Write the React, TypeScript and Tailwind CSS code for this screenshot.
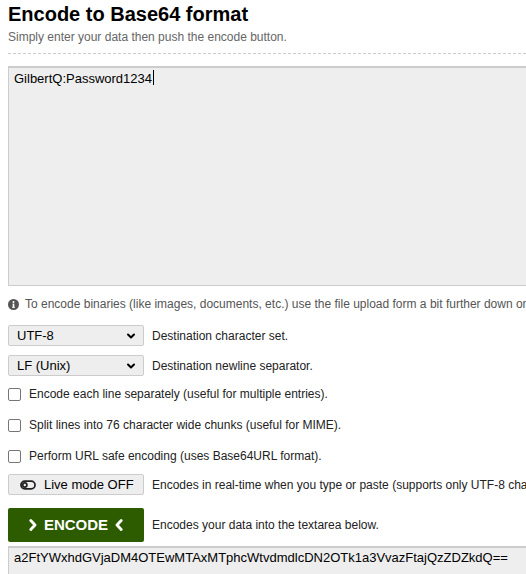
import * as React from "react";
import { ChevronDown } from "lucide-react";

const OUTPUT = "a2FtYWxhdGVjaDM4OTEwMTAxMTphcWtvdmdlcDN2OTk1a3VvazFtajQzZDZkdQ==";

function Select({ value }: { value: string }) {
  return (
    <div className="flex h-[21px] w-[136px] shrink-0 items-center justify-between rounded-[2px] border border-[#ccc] bg-[#eee] pl-2 pr-[6px] text-[13px] text-black">
      <span>{value}</span>
      <ChevronDown className="h-[12px] w-[12px]" strokeWidth={4} />
    </div>
  );
}

function Check({ label }: { label: string }) {
  return (
    <div className="flex items-center gap-2">
      <span className="h-[13px] w-[13px] shrink-0 rounded-[2px] border border-[#767676] bg-white" />
      <span>{label}</span>
    </div>
  );
}

function ToggleIcon() {
  return (
    <svg viewBox="0 0 20 12" className="h-[10px] w-[16px]">
      <rect x="1.2" y="1.2" width="17.6" height="9.6" rx="4.8" fill="none" stroke="#222" strokeWidth="2.2" />
      <circle cx="6" cy="6" r="2.6" fill="none" stroke="#222" strokeWidth="2.2" />
    </svg>
  );
}

function Arrow({ dir }: { dir: "left" | "right" }) {
  return (
    <svg viewBox="0 0 8 12" className="h-[12px] w-[8px]">
      <polyline
        points={dir === "right" ? "1.8,1.5 6,6 1.8,10.5" : "6.2,1.5 2,6 6.2,10.5"}
        fill="none"
        stroke="#fff"
        strokeWidth="2.8"
        strokeLinecap="round"
        strokeLinejoin="round"
      />
    </svg>
  );
}

function InfoIcon() {
  return (
    <svg viewBox="0 0 12 12" className="h-[11px] w-[11px] shrink-0">
      <circle cx="6" cy="6" r="6" fill="#555" />
      <circle cx="6" cy="3.2" r="1.1" fill="#fff" />
      <rect x="5.1" y="5" width="1.8" height="4.4" fill="#fff" />
      <rect x="4.4" y="8.6" width="3.2" height="0.9" fill="#fff" />
    </svg>
  );
}

export default function App() {
  return (
    <div className="h-[574px] w-full overflow-hidden bg-white font-['Liberation_Sans',Arial,sans-serif] text-[12px] text-[#222]">
      <div className="w-[760px] whitespace-nowrap px-2">
        <h1 className="pt-[2px] text-[20px] font-bold leading-[24px] text-black">Encode to Base64 format</h1>
        <p className="mt-[4px] text-[12px] leading-[14px] text-[#666]">
          Simply enter your data then push the encode button.
        </p>
        <div className="mt-[9px] w-[518px] border-t border-dashed border-[#ccc]" />

        <div className="mt-[12px] h-[220px] w-full border-t-2 border-r border-b border-l border-[#ccc] bg-[#eee] px-[5px] pt-0 text-[13px] leading-[16px] text-black">
          GilbertQ:Password1234<span className="ml-px inline-block h-[15px] w-px translate-y-[2px] bg-black" />
        </div>

        <div className="mt-[9px] flex items-center gap-[6px] text-[#555]">
          <InfoIcon />
          <span>
            To encode binaries (like images, documents, etc.) use the file upload form a bit further down on this page.
          </span>
        </div>

        <div className="mt-[12px] flex items-center gap-2">
          <Select value="UTF-8" />
          <span>Destination character set.</span>
        </div>
        <div className="mt-[9px] flex items-center gap-2">
          <Select value="LF (Unix)" />
          <span>Destination newline separator.</span>
        </div>

        <div className="mt-[9px] flex flex-col gap-[13px]">
          <Check label="Encode each line separately (useful for multiple entries)." />
          <Check label="Split lines into 76 character wide chunks (useful for MIME)." />
          <Check label="Perform URL safe encoding (uses Base64URL format)." />
        </div>

        <div className="mt-[9px] flex items-center gap-2">
          <div className="flex h-[21px] w-[136px] shrink-0 items-center gap-[8px] rounded-[2px] border border-[#ccc] bg-[#eee] pl-[11px] text-[13px] text-black">
            <ToggleIcon />
            <span>Live mode OFF</span>
          </div>
          <span>Encodes in real-time when you type or paste (supports only UTF-8 character set).</span>
        </div>

        <div className="mt-[13px] flex items-center gap-2">
          <div className="flex h-[34px] w-[136px] shrink-0 items-center justify-center gap-[7px] rounded-[2px] bg-[#2c5b00] text-[15px] font-bold text-white">
            <Arrow dir="right" />
            <span>ENCODE</span>
            <Arrow dir="left" />
          </div>
          <span>Encodes your data into the textarea below.</span>
        </div>

        <div className="mt-[4px] h-[40px] w-full border-t-2 border-r border-l border-[#ccc] bg-[#eee] px-[5px] pt-[2px] text-[13px] leading-[16px] text-black">
          {OUTPUT}
        </div>
      </div>
    </div>
  );
}
